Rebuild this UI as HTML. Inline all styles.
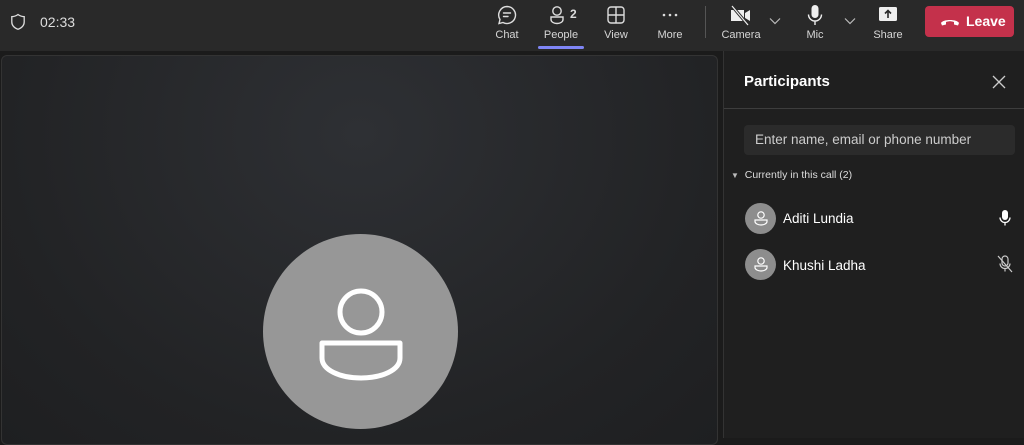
<!DOCTYPE html>
<html><head><style>
*{margin:0;padding:0;box-sizing:border-box}
body{width:1024px;height:438px;overflow:hidden;background:#1b1b1b;font-family:"Liberation Sans",sans-serif;color:#fff;position:relative}
.top{position:absolute;left:0;top:0;width:1024px;height:51px;background:#292929}
.btn{position:absolute;top:0;height:51px;text-align:center;font-size:11px;color:#d6d6d6}
.btn svg{position:absolute;top:4px;left:50%;transform:translateX(-50%)}
.btn span{position:absolute;top:29px;left:0;right:0}
.stage{position:absolute;left:1px;top:55px;width:717px;height:390px;border-radius:6px;background:radial-gradient(ellipse at 50% 20%,#2e3034,#222325 70%,#1e1f21);border:1px solid #333}
.panel{position:absolute;left:723px;top:51px;width:301px;height:387px;background:#1f1f1f;border-left:1px solid #333}
.av{position:absolute;width:31px;height:31px;border-radius:50%;background:#8d8d8d}
</style></head><body>
<div class="top">
<svg style="position:absolute;left:10px;top:13px" width="16" height="18" viewBox="0 0 16 18"><path d="M8 1.5C6 3 4 3.6 1.8 3.6V9c0 3.6 2.6 5.9 6.2 7.3 3.6-1.4 6.2-3.7 6.2-7.3V3.6C12 3.6 10 3 8 1.5z" fill="none" stroke="#ddd" stroke-width="1.3"/></svg>
<div style="position:absolute;left:40px;top:14px;font-size:14px;color:#ddd">02:33</div>
<div class="btn" style="left:487px;width:40px"><svg width="22" height="22" viewBox="0 0 22 22"><path d="M11 2.5a8.5 8.5 0 1 1-4 16L3 19.5l1-4A8.5 8.5 0 0 1 11 2.5z" fill="none" stroke="#ddd" stroke-width="1.4"/><path d="M7.5 9h7M7.5 12.5h4.5" stroke="#ddd" stroke-width="1.4" stroke-linecap="round"/></svg><span>Chat</span></div>
<div class="btn" style="left:538px;width:46px"><svg width="34" height="22" viewBox="0 0 34 22" style="margin-left:4px"><circle cx="9" cy="7" r="4.2" fill="none" stroke="#ddd" stroke-width="1.4"/><path d="M3 13h12v2.5c0 2.5-3 4-6 4s-6-1.5-6-4z" fill="none" stroke="#ddd" stroke-width="1.4"/><text x="22" y="14" font-size="12" font-weight="bold" fill="#ddd" font-family="Liberation Sans">2</text></svg><span>People</span><div style="position:absolute;left:0;right:0;top:46px;height:3px;border-radius:2px;background:#7f85f5"></div></div>
<div class="btn" style="left:596px;width:40px"><svg width="22" height="22" viewBox="0 0 22 22"><rect x="3" y="3" width="16" height="16" rx="3" fill="none" stroke="#ddd" stroke-width="1.4"/><path d="M11 3v16M3 11h16" stroke="#ddd" stroke-width="1.4"/></svg><span>View</span></div>
<div class="btn" style="left:650px;width:40px"><svg width="22" height="22" viewBox="0 0 22 22"><circle cx="5" cy="11" r="1.3" fill="#ddd"/><circle cx="11" cy="11" r="1.3" fill="#ddd"/><circle cx="17" cy="11" r="1.3" fill="#ddd"/></svg><span>More</span></div>
<div style="position:absolute;left:705px;top:6px;width:1px;height:32px;background:#555"></div>
<div class="btn" style="left:718px;width:46px"><svg width="24" height="22" viewBox="0 0 24 22"><path d="M2 6h13v11H2z" fill="#eee"/><path d="M16 9l5-3v11l-5-3z" fill="#eee"/><path d="M3 2l16 19" stroke="#292929" stroke-width="3"/><path d="M3 2l16 19" stroke="#eee" stroke-width="1.2"/></svg><span>Camera</span></div>
<svg style="position:absolute;left:769px;top:17px" width="12" height="8" viewBox="0 0 12 8"><path d="M1 1.5l5 5 5-5" fill="none" stroke="#bbb" stroke-width="1.2"/></svg>
<div class="btn" style="left:800px;width:30px"><svg width="22" height="22" viewBox="0 0 22 22"><rect x="7.5" y="1" width="7" height="13" rx="3.5" fill="#eee"/><path d="M4.5 10.5a6.5 6.5 0 0 0 13 0M11 17v4" fill="none" stroke="#eee" stroke-width="1.4"/></svg><span>Mic</span></div>
<svg style="position:absolute;left:844px;top:17px" width="12" height="8" viewBox="0 0 12 8"><path d="M1 1.5l5 5 5-5" fill="none" stroke="#bbb" stroke-width="1.2"/></svg>
<div class="btn" style="left:868px;width:40px"><svg width="22" height="22" viewBox="0 0 22 22"><rect x="2" y="3" width="18" height="14" rx="1.5" fill="#eee"/><path d="M11 14V7M8 9.5l3-3 3 3" fill="none" stroke="#292929" stroke-width="1.6"/></svg><span>Share</span></div>
<div style="position:absolute;left:925px;top:6px;width:89px;height:31px;border-radius:4px;background:#c4314b;font-size:14px;font-weight:bold;color:#fff;line-height:31px;padding-left:41px">Leave</div>
<svg style="position:absolute;left:940px;top:17px" width="20" height="9" viewBox="0 0 20 9"><path d="M1 6c2-4 16-4 18 0l-1 2.5-4-1V5c-3-1-5-1-8 0v2.5l-4 1z" fill="#fff"/></svg>
</div>
<div class="stage">
<div style="position:absolute;left:261px;top:178px;width:195px;height:195px;border-radius:50%;background:#979797"></div>
<svg style="position:absolute;left:315px;top:226px" width="90" height="100" viewBox="0 0 90 100"><circle cx="44" cy="30" r="21" fill="none" stroke="#fff" stroke-width="5"/><path d="M5 61h78v15c0 12-18 20-39 20S5 88 5 76z" fill="none" stroke="#fff" stroke-width="5" stroke-linejoin="round"/></svg>
</div>
<div class="panel">
<div style="position:absolute;left:20px;top:22px;font-size:15px;font-weight:bold">Participants</div>
<svg style="position:absolute;left:268px;top:24px" width="14" height="14" viewBox="0 0 14 14"><path d="M1 1l12 12M13 1L1 13" stroke="#ccc" stroke-width="1.3"/></svg>
<div style="position:absolute;left:0;right:0;top:57px;height:1px;background:#3d3d3d"></div>
<div style="position:absolute;left:20px;top:74px;width:271px;height:30px;background:#2b2b2b;border-radius:4px;font-size:13.5px;color:#ccc;line-height:30px;padding-left:11px">Enter name, email or phone number</div>
<div style="position:absolute;left:7px;top:118px;font-size:10.5px;color:#ddd"><span style="font-size:8px;color:#bbb">▼</span>&nbsp; Currently in this call (2)</div>
<div class="av" style="left:21px;top:152px"></div>
<svg style="position:absolute;left:29px;top:159px" width="16" height="17" viewBox="0 0 16 17"><circle cx="8" cy="5" r="3.2" fill="none" stroke="#fff" stroke-width="1.2"/><path d="M2 10h12v1.5c0 2-3 3.5-6 3.5s-6-1.5-6-3.5z" fill="none" stroke="#fff" stroke-width="1.2"/></svg>
<div style="position:absolute;left:59px;top:160px;font-size:13.5px">Aditi Lundia</div>
<svg style="position:absolute;left:274px;top:158px" width="14" height="18" viewBox="0 0 14 18"><rect x="4" y="1" width="6" height="10" rx="3" fill="#fff"/><path d="M2 8.5a5 5 0 0 0 10 0M7 13.5v3" fill="none" stroke="#fff" stroke-width="1.3"/></svg>
<div class="av" style="left:21px;top:198px"></div>
<svg style="position:absolute;left:29px;top:205px" width="16" height="17" viewBox="0 0 16 17"><circle cx="8" cy="5" r="3.2" fill="none" stroke="#fff" stroke-width="1.2"/><path d="M2 10h12v1.5c0 2-3 3.5-6 3.5s-6-1.5-6-3.5z" fill="none" stroke="#fff" stroke-width="1.2"/></svg>
<div style="position:absolute;left:59px;top:207px;font-size:13.5px">Khushi Ladha</div>
<svg style="position:absolute;left:273px;top:204px" width="16" height="18" viewBox="0 0 16 18"><rect x="5" y="1" width="6" height="10" rx="3" fill="none" stroke="#ccc" stroke-width="1.2"/><path d="M3 8.5a5 5 0 0 0 10 0M8 13.5v3M1 1l14 16" fill="none" stroke="#ccc" stroke-width="1.2"/></svg>
</div>
</body></html>
